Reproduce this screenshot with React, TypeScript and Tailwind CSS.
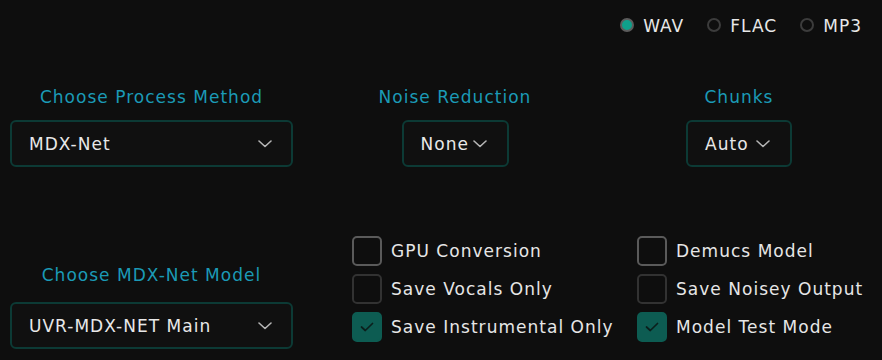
import { useState } from 'react'

type Fmt = 'WAV' | 'FLAC' | 'MP3'

function Chevron() {
  return (
    <svg width="14" height="8" viewBox="0 0 14 8" fill="none" className="shrink-0">
      <path d="M1 1l6 5.5L13 1" stroke="#b5b5b5" strokeWidth="1.6" strokeLinecap="round" strokeLinejoin="round" />
    </svg>
  )
}

function Select({ value, className, gap }: { value: string; className: string; gap: string }) {
  return (
    <div
      className={`h-[47px] flex items-center rounded-[6px] border-2 border-[#0c3a35] bg-[#101010] text-[#e8e8e8] ${className}`}
    >
      <span className={`whitespace-nowrap pt-[3px] ${gap}`}>{value}</span>
      <Chevron />
    </div>
  )
}

function Label({ children }: { children: string }) {
  return <div className="h-[24px] leading-[24px] pt-[1px] text-center whitespace-nowrap text-[#1b9ab6]">{children}</div>
}

function Check({ label, state }: { label: string; state: 'hover' | 'off' | 'on' }) {
  const box =
    state === 'on'
      ? 'bg-[#0d5c52] border-[#0d5c52]'
      : state === 'hover'
        ? 'border-[#5a5a5a]'
        : 'border-[#323232]'
  return (
    <div className="h-[30px] flex items-center gap-[9px]">
      <div className={`w-[30px] h-[30px] shrink-0 rounded-[5px] border-2 flex items-center justify-center ${box}`}>
        {state === 'on' && (
          <svg width="14" height="10" viewBox="0 0 14 10" fill="none">
            <path d="M1.5 5l3.8 3.5L12.5 1.5" stroke="#0b1f1c" strokeWidth="1.7" strokeLinecap="round" strokeLinejoin="round" />
          </svg>
        )}
      </div>
      <span className="whitespace-nowrap pt-[2px] text-[#e6e6e6]">{label}</span>
    </div>
  )
}

export default function App() {
  const [fmt, setFmt] = useState<Fmt>('WAV')

  return (
    <main className="w-[882px] h-[360px] overflow-hidden bg-[#0e0e0e] font-['DejaVu_Sans',sans-serif] text-[17px] tracking-[0.06em]">
      <div className="h-[50px] flex items-center justify-end pr-[20px] gap-[23px] text-[#e8e8e8]">
        {(['WAV', 'FLAC', 'MP3'] as Fmt[]).map((f) => (
          <button key={f} onClick={() => setFmt(f)} className="flex items-center gap-[9px]">
            <span
              className={`block w-[14px] h-[14px] shrink-0 rounded-full border-2 ${
                fmt === f ? 'border-[#5c5c5c] bg-[#0fa08b]' : 'border-[#3c3c3c]'
              }`}
            />
            <span className="leading-[20px] pt-[1px]">{f}</span>
          </button>
        ))}
      </div>

      <div className="mt-[34px] flex pl-[10px]">
        <div className="w-[283px] shrink-0">
          <Label>Choose Process Method</Label>
          <Select value="MDX-Net" className="mt-[12px] w-full justify-between pl-[17px] pr-[19px]" gap="" />
        </div>
        <div className="ml-[59px] w-[206px] shrink-0 flex flex-col items-center">
          <Label>Noise Reduction</Label>
          <Select value="None" className="mt-[12px] w-[107px] pl-[17px]" gap="mr-[4px]" />
        </div>
        <div className="ml-[79px] w-[204px] shrink-0 flex flex-col items-center">
          <Label>Chunks</Label>
          <Select value="Auto" className="mt-[12px] w-[106px] pl-[17px]" gap="mr-[7px]" />
        </div>
      </div>

      <div className="mt-[69px] flex pl-[10px]">
        <div className="w-[283px] shrink-0 pt-[26px]">
          <Label>Choose MDX-Net Model</Label>
          <Select value="UVR-MDX-NET Main" className="mt-[16px] w-full justify-between pl-[17px] pr-[19px]" gap="" />
        </div>
        <div className="ml-[59px] w-[226px] shrink-0 flex flex-col gap-[8px]">
          <Check label="GPU Conversion" state="hover" />
          <Check label="Save Vocals Only" state="off" />
          <Check label="Save Instrumental Only" state="on" />
        </div>
        <div className="ml-[59px] w-[230px] shrink-0 flex flex-col gap-[8px]">
          <Check label="Demucs Model" state="hover" />
          <Check label="Save Noisey Output" state="off" />
          <Check label="Model Test Mode" state="on" />
        </div>
      </div>
    </main>
  )
}
